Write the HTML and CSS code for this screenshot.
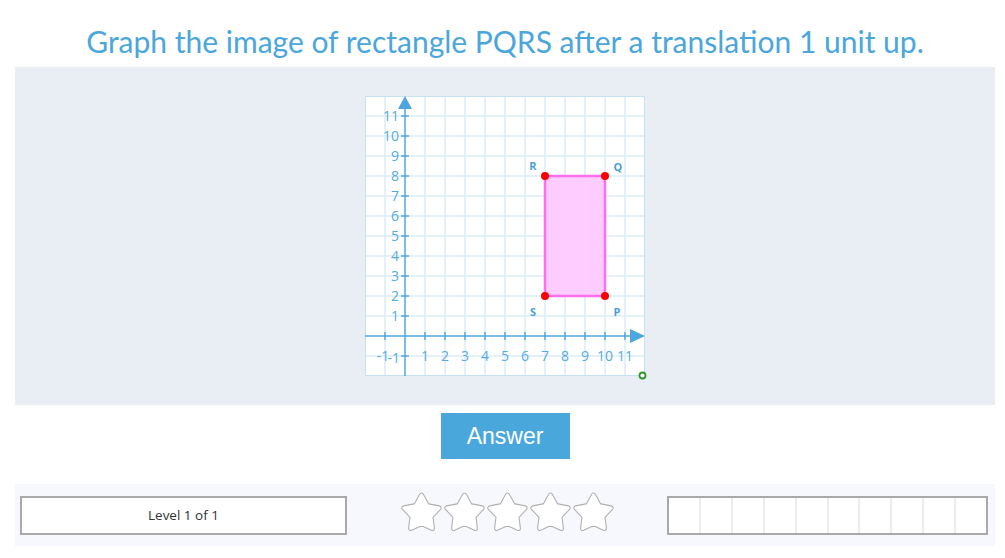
FILE: index.html
```html
<!DOCTYPE html>
<html lang="en">
<head>
    <meta charset="UTF-8">
    <title>Translation - Graph</title>
    <link rel="stylesheet" href="styles.css">
</head>
<body>
    <!-- Question -->
    <h1 class="prompt">Graph the image of rectangle PQRS after a translation 1 unit up.</h1>

    <!-- Graph area -->
    <div class="stage">
        <svg class="graph" width="280" height="280" viewBox="0 0 280 280">
            <rect x="0" y="0" width="280" height="280" fill="#fff"/>
            <path class="grid" d="M20 0V280M60 0V280M80 0V280M100 0V280M120 0V280M140 0V280M160 0V280M180 0V280M200 0V280M220 0V280M240 0V280M260 0V280
                M0 20H280M0 40H280M0 60H280M0 80H280M0 100H280M0 120H280M0 140H280M0 160H280M0 180H280M0 200H280M0 220H280M0 260H280"/>
            <rect class="frame" x="0.5" y="0.5" width="279" height="279"/>

            <!-- axes -->
            <path class="axis" d="M0 240H268M40 280V12"/>
            <polygon class="arrow" points="265,233 280,240 265,247"/>
            <polygon class="arrow" points="33,13 40,0 47,13"/>
            <path class="axis" d="M20 236V244M60 236V244M80 236V244M100 236V244M120 236V244M140 236V244M160 236V244M180 236V244M200 236V244M220 236V244M240 236V244M260 236V244
                M36 260H44M36 220H44M36 200H44M36 180H44M36 160H44M36 140H44M36 120H44M36 100H44M36 80H44M36 60H44M36 40H44M36 20H44"/>

            <g class="num xnum">
                <text x="18" y="265">-1</text>
                <text x="60" y="265">1</text>
                <text x="80" y="265">2</text>
                <text x="100" y="265">3</text>
                <text x="120" y="265">4</text>
                <text x="140" y="265">5</text>
                <text x="160" y="265">6</text>
                <text x="180" y="265">7</text>
                <text x="200" y="265">8</text>
                <text x="220" y="265">9</text>
                <text x="240" y="265">10</text>
                <text x="260" y="265">11</text>
            </g>
            <g class="num ynum">
                <text x="35" y="267">-1</text>
                <text x="34" y="225">1</text>
                <text x="34" y="205">2</text>
                <text x="34" y="185">3</text>
                <text x="34" y="165">4</text>
                <text x="34" y="145">5</text>
                <text x="34" y="125">6</text>
                <text x="34" y="105">7</text>
                <text x="34" y="85">8</text>
                <text x="34" y="65">9</text>
                <text x="34" y="45">10</text>
                <text x="34" y="25">11</text>
            </g>

            <!-- rectangle PQRS -->
            <rect class="shape" x="180" y="80" width="60" height="120"/>
            <circle class="pt" cx="180" cy="80" r="4"/>
            <circle class="pt" cx="240" cy="80" r="4"/>
            <circle class="pt" cx="240" cy="200" r="4"/>
            <circle class="pt" cx="180" cy="200" r="4"/>
            <g class="vlabel">
                <text x="168" y="74">R</text>
                <text x="253" y="75">Q</text>
                <text x="168" y="220">S</text>
                <text x="252" y="220">P</text>
            </g>

            <circle class="handle" cx="277.5" cy="279.5" r="3"/>
        </svg>
    </div>

    <div class="actions">
        <button class="answer-btn">Answer</button>
    </div>

    <!-- Status bar -->
    <div class="status-bar">
        <div class="level-box">Level 1 of 1</div>
        <div class="stars">
            <svg class="star" viewBox="0 0 40 40"><path class="star-out" d="M20 4L25.3 13.7L36.2 15.8L28.6 23.8L30 34.8L20 30L10 34.8L11.4 23.8L3.8 15.8L14.7 13.7Z"/><path class="star-in" d="M20 4L25.3 13.7L36.2 15.8L28.6 23.8L30 34.8L20 30L10 34.8L11.4 23.8L3.8 15.8L14.7 13.7Z"/></svg>
            <svg class="star" viewBox="0 0 40 40"><path class="star-out" d="M20 4L25.3 13.7L36.2 15.8L28.6 23.8L30 34.8L20 30L10 34.8L11.4 23.8L3.8 15.8L14.7 13.7Z"/><path class="star-in" d="M20 4L25.3 13.7L36.2 15.8L28.6 23.8L30 34.8L20 30L10 34.8L11.4 23.8L3.8 15.8L14.7 13.7Z"/></svg>
            <svg class="star" viewBox="0 0 40 40"><path class="star-out" d="M20 4L25.3 13.7L36.2 15.8L28.6 23.8L30 34.8L20 30L10 34.8L11.4 23.8L3.8 15.8L14.7 13.7Z"/><path class="star-in" d="M20 4L25.3 13.7L36.2 15.8L28.6 23.8L30 34.8L20 30L10 34.8L11.4 23.8L3.8 15.8L14.7 13.7Z"/></svg>
            <svg class="star" viewBox="0 0 40 40"><path class="star-out" d="M20 4L25.3 13.7L36.2 15.8L28.6 23.8L30 34.8L20 30L10 34.8L11.4 23.8L3.8 15.8L14.7 13.7Z"/><path class="star-in" d="M20 4L25.3 13.7L36.2 15.8L28.6 23.8L30 34.8L20 30L10 34.8L11.4 23.8L3.8 15.8L14.7 13.7Z"/></svg>
            <svg class="star" viewBox="0 0 40 40"><path class="star-out" d="M20 4L25.3 13.7L36.2 15.8L28.6 23.8L30 34.8L20 30L10 34.8L11.4 23.8L3.8 15.8L14.7 13.7Z"/><path class="star-in" d="M20 4L25.3 13.7L36.2 15.8L28.6 23.8L30 34.8L20 30L10 34.8L11.4 23.8L3.8 15.8L14.7 13.7Z"/></svg>
        </div>
        <div class="progress">
            <span class="cell"></span><span class="cell"></span><span class="cell"></span><span class="cell"></span><span class="cell"></span>
            <span class="cell"></span><span class="cell"></span><span class="cell"></span><span class="cell"></span><span class="cell"></span>
        </div>
    </div>
</body>
</html>
```

FILE: styles.css
```css
body {
    margin: 0;
    padding: 0 10px 0 15px;
    background-color: #fff;
    font-family: "Lato", "Open Sans", sans-serif;
}
.prompt {
    margin: 0;
    padding: 21px 0 6px;
    height: 40px;
    line-height: 40px;
    font-size: 30px;
    font-weight: normal;
    color: #4ba6dc;
    text-align: center;
}
.stage {
    height: 338px;
    box-sizing: border-box;
    padding-top: 29px;
    background-color: #e8eef3;
    display: flex;
    justify-content: center;
}
.graph {
    overflow: visible;
    display: block;
}
.grid {
    stroke: #dcedf8;
    stroke-width: 1.5;
    fill: none;
}
.frame {
    stroke: #c7e2f3;
    stroke-width: 1;
    fill: none;
}
.axis {
    stroke: #52a8de;
    stroke-width: 1.5;
    fill: none;
}
.arrow {
    fill: #4fa6dc;
}
.num {
    font-family: "Open Sans", sans-serif;
    font-size: 14px;
    fill: #55abe0;
}
.xnum {
    text-anchor: middle;
}
.ynum {
    text-anchor: end;
}
.shape {
    fill: #ffccff;
    stroke: #ff6ef0;
    stroke-width: 2.5;
}
.pt {
    fill: #ff0000;
}
.vlabel {
    font-family: "Open Sans", sans-serif;
    font-size: 11px;
    font-weight: bold;
    fill: #4b9fd6;
    text-anchor: middle;
}
.handle {
    fill: #fff;
    stroke: #2e962e;
    stroke-width: 1.8;
}
.actions {
    display: flex;
    justify-content: center;
    padding: 8px 0 25px;
}
.answer-btn {
    width: 129px;
    height: 46px;
    border: none;
    border-radius: 0;
    background-color: #4aa7dc;
    color: #fff;
    font-family: "Liberation Sans", Arial, sans-serif;
    font-size: 23px;
    padding: 0;
    cursor: pointer;
}
.status-bar {
    height: 62px;
    background-color: #f7f8fd;
    display: flex;
    align-items: center;
    justify-content: space-between;
    padding: 0 7px 0 5px;
}
.level-box {
    width: 327px;
    height: 39px;
    box-sizing: border-box;
    border: 2px solid #a9a9a9;
    background-color: #fff;
    display: flex;
    align-items: center;
    justify-content: center;
    font-family: "Open Sans", sans-serif;
    font-size: 13.5px;
    color: #333;
}
.stars {
    display: flex;
    margin-top: -6px;
}
.star {
    width: 43px;
    height: 43px;
    display: block;
}
.star-out {
    fill: #b0b0b0;
    stroke: #b0b0b0;
    stroke-width: 5;
    stroke-linejoin: round;
}
.star-in {
    fill: #fff;
    stroke: #fff;
    stroke-width: 3;
    stroke-linejoin: round;
}
.progress {
    width: 321px;
    height: 39px;
    box-sizing: border-box;
    border: 2px solid #a9a9a9;
    background-color: #fff;
    display: flex;
}
.cell {
    flex: 1;
    border-left: 2px solid #ececec;
}
.cell:first-child {
    border-left: none;
}
```
